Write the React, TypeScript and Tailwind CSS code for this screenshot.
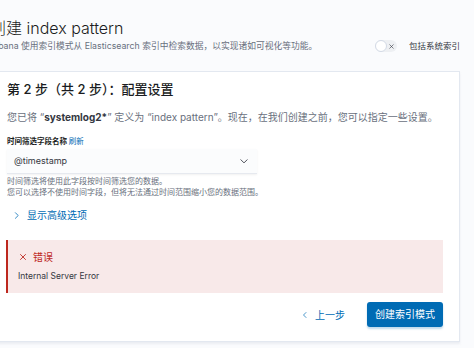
import React from 'react';

const font = { fontFamily: 'Inter, "Noto Sans CJK SC", sans-serif' };

const Chevron: React.FC<{ dir: 'down' | 'right' | 'left'; className?: string }> = ({ dir, className }) => {
  const d = dir === 'down' ? 'M3 6l5 5 5-5' : dir === 'right' ? 'M6 3l5 5-5 5' : 'M10 3L5 8l5 5';
  return (
    <svg viewBox="0 0 16 16" className={className} fill="none" stroke="currentColor" strokeWidth="1.4" strokeLinecap="round" strokeLinejoin="round">
      <path d={d} />
    </svg>
  );
};

const Cross: React.FC<{ className?: string }> = ({ className }) => (
  <svg viewBox="0 0 16 16" className={className} fill="none" stroke="currentColor" strokeWidth="1.4" strokeLinecap="round">
    <path d="M4 4l8 8M12 4l-8 8" />
  </svg>
);

const App: React.FC = () => {
  return (
    <div className="min-h-screen w-[474px] overflow-hidden bg-[#fafbfd]" style={font}>
      <div className="ml-[-10px] mr-[14px] pt-[16px]">
        {/* header */}
        <div className="flex items-end justify-between">
          <div>
            <h1 className="text-[16px] leading-[24px] font-light text-[#1a1c21]">创建 index pattern</h1>
            <p className="text-[8.75px] leading-[12px] text-[#69707d]">
              Kibana 使用索引模式从 Elasticsearch 索引中检索数据，以实现诸如可视化等功能。
            </p>
          </div>
          <div className="flex items-center gap-[12px]">
            <div className="relative flex h-[12px] w-[22px] items-center rounded-full bg-[#eef0f3]">
              <span className="absolute left-0 top-0 h-[12px] w-[12px] rounded-full border border-[#d3dae6] bg-white" />
              <Cross className="absolute right-[2px] h-[7px] w-[7px] text-[#343741]" />
            </div>
            <span className="text-[8.5px] leading-[12px] text-[#343741]">包括系统索引</span>
          </div>
        </div>

        {/* panel */}
        <div className="mt-[19px] border border-[#e3e8f0] bg-white pl-[16px] pr-[16px] pt-[8px] pb-[14px] shadow-[0_2px_2px_rgba(152,162,179,0.15)]">
          <h2 className="text-[13px] leading-[18px] font-medium text-[#1a1c21]">第 2 步（共 2 步）：配置设置</h2>
          <p className="mt-[12px] text-[10px] leading-[15px] text-[#69707d]">
            您已将 “<span className="font-bold text-[#343741]">systemlog2*</span>” 定义为 “index pattern”。现在，在我们创建之前，您可以指定一些设置。
          </p>

          <div className="mt-[11px]">
            <div className="text-[7.5px] leading-[12px] font-bold text-[#1a1c21]">
              时间筛选字段名称 <span className="font-normal text-[#006bb4]">刷新</span>
            </div>
            <div className="mt-[1px] flex h-[25px] w-[250px] items-center justify-between border-b border-[#e6e9ef] bg-[#fbfcfd] pl-[7px] pr-[8px] shadow-[0_1px_2px_rgba(0,0,0,0.06)]">
              <span className="text-[9px] text-[#343741]">@timestamp</span>
              <Chevron dir="down" className="h-[10px] w-[10px] text-[#343741]" />
            </div>
            <div className="mt-[2px] text-[8px] leading-[11px] text-[#69707d]">
              <div>时间筛选将使用此字段按时间筛选您的数据。</div>
              <div>您可以选择不使用时间字段，但将无法通过时间范围缩小您的数据范围。</div>
            </div>
          </div>

          <div className="mt-[9px] flex items-center gap-[6px] pl-[5px] text-[#006bb4]">
            <Chevron dir="right" className="h-[9px] w-[9px]" />
            <span className="text-[10px] leading-[16px]">显示高级选项</span>
          </div>

          <div className="mt-[17px] ml-[-1px] border-l-2 border-[#bd271e] bg-[#f8e9e9] pl-[10px] pt-[9px] pb-[11px]">
            <div className="flex items-center gap-[5px] text-[#bd271e]">
              <Cross className="h-[10px] w-[10px]" />
              <span className="text-[10px] leading-[16px]">错误</span>
            </div>
            <div className="mt-[5px] text-[8.5px] leading-[12px] text-[#343741]">Internal Server Error</div>
          </div>

          <div className="mt-[9px] flex items-center justify-end gap-[22px]">
            <div className="flex items-center gap-[6px] text-[#006bb4]">
              <Chevron dir="left" className="h-[8px] w-[8px]" />
              <span className="text-[10px] leading-[14px]">上一步</span>
            </div>
            <button className="h-[25px] rounded-[3px] bg-[#006bb4] px-[8px] text-[10px] text-white shadow-[0_2px_2px_rgba(0,107,180,0.25)]">
              创建索引模式
            </button>
          </div>
        </div>
      </div>
    </div>
  );
};

export default App;
